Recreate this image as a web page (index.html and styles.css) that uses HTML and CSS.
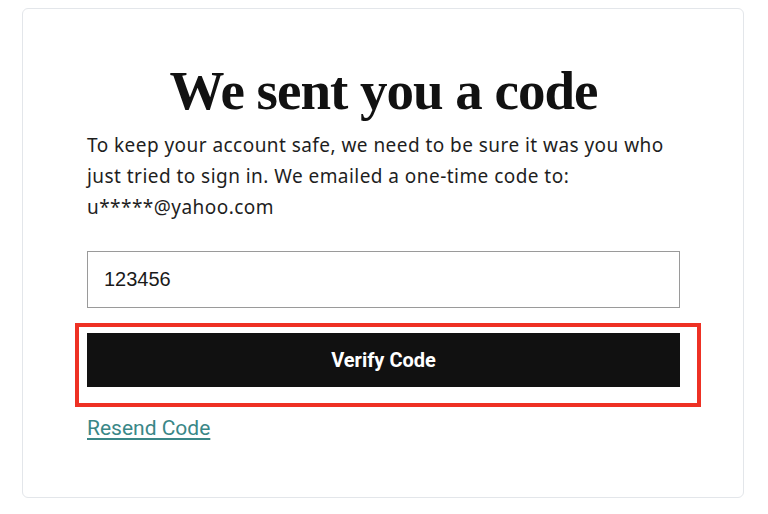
FILE: index.html
```html
<!DOCTYPE html>
<html>
<head>
<meta charset="utf-8">
<link rel="stylesheet" href="styles.css">
</head>
<body>
<div class="page">
  <div class="card">
    <h1 class="title">We sent you a code</h1>
    <p class="desc">To keep your account safe, we need to be sure it was you who just tried to sign in. We emailed a one-time code to: u*****@yahoo.com</p>
    <div class="field">123456</div>
    <div class="highlight">
      <button class="verify">Verify Code</button>
    </div>
    <a class="resend" href="#">Resend Code</a>
  </div>
</div>
</body>
</html>
```

FILE: styles.css
```css
html, body {
  margin: 0;
  padding: 0;
  background: #ffffff;
}
.page {
  width: 768px;
  height: 514px;
  padding: 8px 24px 16px 22px;
  box-sizing: border-box;
}
.card {
  box-sizing: border-box;
  width: 722px;
  height: 490px;
  border: 1.5px solid #e3e6ea;
  border-radius: 6px;
  padding: 0 63px 0 64px;
  display: flex;
  flex-direction: column;
}
.title {
  margin: 52px 0 0 0;
  font-family: "Liberation Serif", serif;
  font-weight: 700;
  font-size: 55px;
  line-height: 60px;
  letter-spacing: -1px;
  text-align: center;
  color: #111111;
}
.desc {
  margin: 9px 0 0 0;
  font-family: "Noto Sans", sans-serif;
  font-size: 19px;
  letter-spacing: 0.45px;
  line-height: 31px;
  color: #1e1e1e;
  width: 592px;
}
.field {
  margin-top: 28px;
  height: 57px;
  box-sizing: border-box;
  border: 1.5px solid #9a9a9a;
  padding: 0 16px;
  display: flex;
  align-items: center;
  font-family: "Liberation Sans", sans-serif;
  font-size: 20px;
  color: #1a1a1a;
}
.highlight {
  margin: 15px -21px 0 -12px;
  border: 4px solid #ee3124;
  padding: 6px 17px 16px 8px;
}
.verify {
  display: block;
  width: 100%;
  height: 54px;
  border: none;
  background: #111111;
  color: #ffffff;
  font-family: Roboto, "Liberation Sans", sans-serif;
  font-weight: 700;
  font-size: 20px;
}
.resend {
  margin-top: 9px;
  align-self: flex-start;
  font-family: Roboto, "Liberation Sans", sans-serif;
  font-size: 21px;
  color: #3a8787;
  text-decoration: underline;
  text-underline-offset: 3px;
}
```
